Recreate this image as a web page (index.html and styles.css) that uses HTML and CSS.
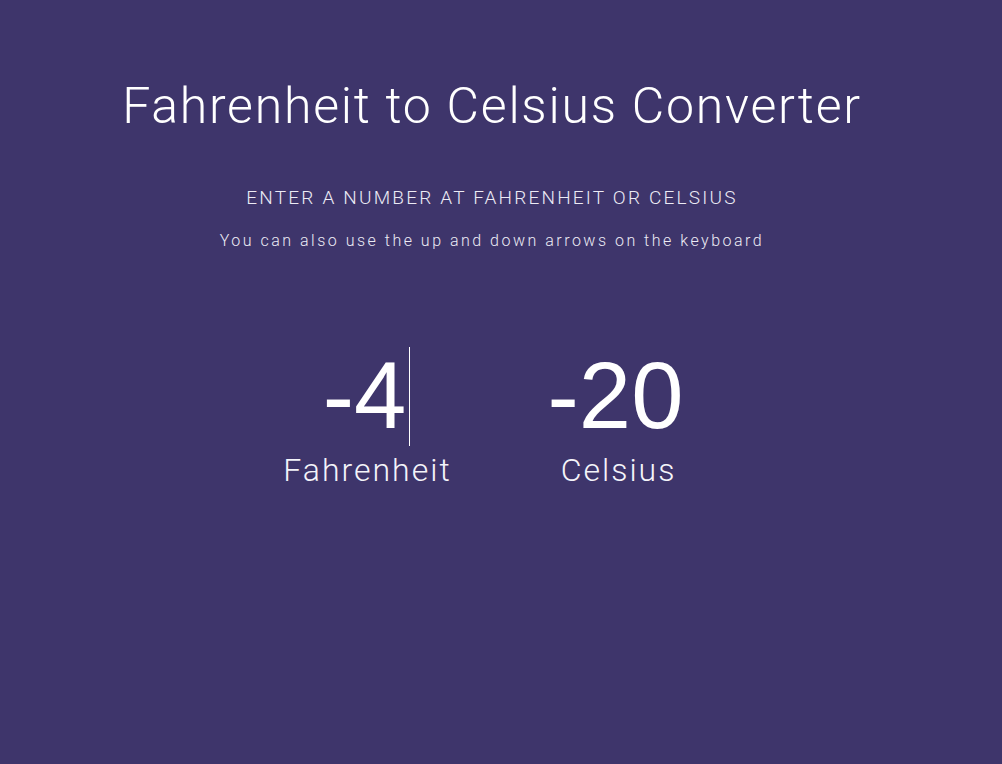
FILE: index.html
```html
<!DOCTYPE html>
<html lang="en">
<head>
<meta charset="utf-8">
<title>Fahrenheit to Celsius Converter</title>
<link rel="stylesheet" href="styles.css">
</head>
<body>
<main class="app">
  <h1 class="title">Fahrenheit to Celsius Converter</h1>
  <p class="hint">ENTER A NUMBER AT FAHRENHEIT OR CELSIUS</p>
  <p class="note">You can also use the up and down arrows on the keyboard</p>
  <section class="fields">
    <div class="field">
      <div class="value">-4<span class="caret"></span></div>
      <div class="label">Fahrenheit</div>
    </div>
    <div class="field">
      <div class="value">-20</div>
      <div class="label">Celsius</div>
    </div>
  </section>
</main>
</body>
</html>
```
FILE: styles.css
```css
html, body {
  margin: 0;
  height: 100%;
}

body {
  background: #3e356b;
  color: #ffffff;
  font-family: Roboto, "Liberation Sans", sans-serif;
  font-weight: 300;
}

.app {
  display: flex;
  flex-direction: column;
  align-items: center;
  padding: 0 18px 0 0;
}

.title {
  margin: 74px 0 0;
  font-size: 50px;
  font-weight: 300;
  line-height: 64px;
  letter-spacing: 1.75px;
}

.hint {
  margin: 48px 0 0;
  font-size: 19px;
  line-height: 24px;
  letter-spacing: 2.2px;
  color: #ecebf5;
}

.note {
  margin: 21px 0 0;
  font-size: 16px;
  line-height: 20px;
  letter-spacing: 2.5px;
  color: #ecebf5;
}

.fields {
  display: flex;
  margin-top: 91px;
  margin-right: 4px;
}

.field {
  width: 251px;
  display: flex;
  flex-direction: column;
  align-items: center;
}

.value {
  font-family: "Liberation Sans", Arial, sans-serif;
  font-weight: 400;
  font-size: 94px;
  line-height: 108px;
}

.caret {
  position: relative;
  display: inline-block;
  width: 0;
  height: 0;
}

.caret::after {
  content: "";
  position: absolute;
  left: 3px;
  bottom: -18px;
  width: 1px;
  height: 99px;
  background: #ffffff;
}

.label {
  font-size: 32px;
  line-height: 40px;
  letter-spacing: 2px;
  padding-left: 6px;
  color: #f4f4fa;
}
```
